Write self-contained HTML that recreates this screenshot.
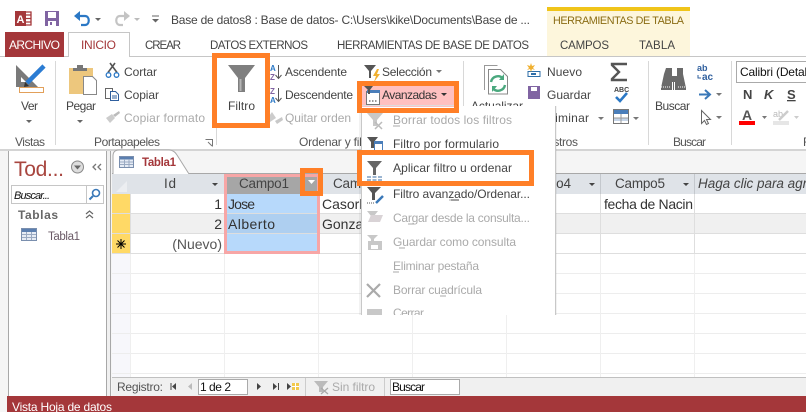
<!DOCTYPE html>
<html><head><meta charset="utf-8"><title>Base de datos8</title>
<style>
html,body{margin:0;padding:0;background:#fff;width:806px;height:412px;overflow:hidden}
svg{display:block}
text{font-family:"Liberation Sans",sans-serif;font-size:12px;fill:#444;white-space:pre}
.g{fill:#aaa}.k{fill:#111}.d{fill:#555}
.a{fill:#666}
</style></head><body>
<svg width="806" height="412" viewBox="0 0 806 412" xmlns="http://www.w3.org/2000/svg">
<rect width="806" height="412" fill="#fff"/>
<!-- contextual tab -->
<rect x="547" y="7" width="143" height="49" fill="#fdf6dc"/><rect x="547" y="7" width="143" height="4" fill="#f0c419"/>
<!-- QAT -->
<rect x="15" y="11" width="11" height="15" fill="#a4373a"/><text x="16.5" y="23" style="font-size:11px;fill:#fff;font-weight:bold">A</text>
<path d="M26 12h5v13h-5M26 15h5M26 18.500h5M26 22h5" fill="none" stroke="#a4373a" stroke-width="1.300"/>
<path d="M45 11h14v15H45z" fill="#8064a2"/><rect x="48" y="12" width="8" height="6" fill="#fff"/><rect x="48" y="21" width="8" height="5" fill="#fff"/><rect x="50" y="22" width="2" height="3" fill="#8064a2"/>
<path d="M76 16h9c5 0 5 9 0 9h-4" fill="none" stroke="#2b78c5" stroke-width="2.200"/><path d="M80 11l-6 5 6 5z" fill="#2b78c5"/>
<path d="M95 18l3 3 3-3z" fill="#666"/>
<path d="M129 16h-9c-5 0-5 9 0 9h3" fill="none" stroke="#c4c4c4" stroke-width="2.200"/><path d="M124 11l6 5-6 5z" fill="#c4c4c4"/>
<path d="M134 18l3 3 3-3z" fill="#bbb"/>
<path d="M152 16h7" stroke="#666"/><path d="M152 19l3.500 3.500 3.500-3.500z" fill="#666"/>
<text x="171" y="24" textLength="359">Base de datos8 : Base de datos- C:\Users\kike\Documents\Base de ...</text>
<text x="553" y="24" textLength="131" style="font-size:10.800px;fill:#8a6c14">HERRAMIENTAS DE TABLA</text>
<!-- tabs -->
<rect x="0" y="56" width="806" height="1" fill="#c6c6c6"/>
<rect x="5" y="32" width="59" height="25" fill="#a4373a"/>
<path d="M68.500 57V32.500H129.500V57" fill="#fff" stroke="#c6c6c6"/>
<text x="9" y="49" textLength="51" style="fill:#fff">ARCHIVO</text>
<text x="81" y="49" textLength="35" style="fill:#a4373a">INICIO</text>
<text x="145" y="49" textLength="36" style="font-size:11.500px">CREAR</text>
<text x="210" y="49" textLength="98" style="font-size:11.500px">DATOS EXTERNOS</text>
<text x="337" y="49" textLength="192" style="font-size:11.500px">HERRAMIENTAS DE BASE DE DATOS</text>
<text x="560" y="49" textLength="49" style="font-size:11.500px">CAMPOS</text>
<text x="639" y="49" textLength="36" style="font-size:11.500px">TABLA</text>
<!-- ribbon -->
<rect x="0" y="149" width="806" height="2" fill="#d4d4d4"/>
<rect x="0" y="151" width="806" height="261" fill="#f5f5f5"/>
<g fill="#d8d8d8"><rect x="55" y="61" width="1" height="84"/><rect x="216" y="61" width="1" height="84"/><rect x="463" y="61" width="1" height="84"/><rect x="648" y="61" width="1" height="84"/><rect x="731" y="61" width="1" height="84"/></g>
<!-- Ver icon -->
<path d="M16 65V87H38Z" fill="#7a7a7a"/><path d="M21 77v5h5z" fill="#fff"/>
<path d="M27 83L44 66" stroke="#2b7cd3" stroke-width="4.500"/><path d="M24 87l1-5 4 4z" fill="#333"/>
<rect x="19.500" y="87.500" width="24" height="5" fill="#fff" stroke="#e2a05a"/>
<text x="21" y="110" textLength="17">Ver</text><path d="M26 120h6l-3 3z" fill="#666"/>
<!-- Pegar -->
<rect x="69" y="68" width="24" height="26" fill="#edc77d"/>
<path d="M73 71v-3h4v-3h6v3h4v3z" fill="#777"/>
<path d="M83.500 76.500h9l4 4v14h-13z" fill="#fff" stroke="#888"/>
<text x="66" y="110" textLength="30">Pegar</text><path d="M77 120h6l-3 3z" fill="#666"/>
<!-- clipboard small -->
<path d="M115 63l-7 9.500M110 63l7 9.500" stroke="#555" stroke-width="1.600"/><circle cx="108.500" cy="75" r="2.300" fill="#fff" stroke="#2b78c5" stroke-width="1.300"/><circle cx="116.500" cy="75" r="2.300" fill="#fff" stroke="#2b78c5" stroke-width="1.300"/>
<text x="124" y="76" textLength="33">Cortar</text>
<path d="M105.500 88.500h7v10h-7z" fill="#fff" stroke="#666"/><path d="M110.500 91.500h5l3 3v6h-8z" fill="#fff" stroke="#2f5f9e"/><path d="M112 96h5M112 98h5" stroke="#2f5f9e"/>
<text x="124" y="99" textLength="35">Copiar</text>
<path d="M106 118l6-4 3 4-5 5z" fill="#ccc"/><path d="M113 115l6-4 1 2-5 4z" fill="#bbb"/>
<text x="124" y="122" textLength="81" class="g">Copiar formato</text>
<text x="94" y="146" textLength="66" class="d">Portapapeles</text>
<text x="15" y="146" textLength="30" class="d">Vistas</text>
<path d="M205.500 139.500h7v7M208 142l4 4" fill="none" stroke="#777"/>
<!-- Filtro -->
<path d="M228 65H255L245 78V92H238V78Z" fill="#7f7f7f"/><path d="M239.500 79h2v12h-2z" fill="#b5b5b5"/>
<text x="228" y="110" textLength="27">Filtro</text>
<!-- sort -->
<text x="270" y="71" style="font-size:8px;fill:#2b78c5;font-weight:bold">A</text><text x="270" y="80" style="font-size:8px;fill:#8064a2;font-weight:bold">Z</text>
<text x="270" y="94" style="font-size:8px;fill:#8064a2;font-weight:bold">Z</text><text x="270" y="103" style="font-size:8px;fill:#2b78c5;font-weight:bold">A</text>
<path d="M278.500 65V78M275.500 75l3 3.500 3-3.500M278.500 88V101M275.500 98l3 3.500 3-3.500" fill="none" stroke="#555"/>
<text x="285" y="76" textLength="62">Ascendente</text>
<text x="285" y="99" textLength="68">Descendente</text>
<path d="M272 112l4 6-6 4-3-3z" fill="#ccc"/><path d="M275 121l7-4 1 3-6 4z" fill="#c8c8c8"/>
<text x="285" y="122" textLength="66" class="g">Quitar orden</text>
<text x="299" y="146" textLength="80" class="d">Ordenar y filtrar</text>
<!-- seleccion -->
<path d="M364 65H376L371 71V78H369V71Z" fill="#555"/><path d="M377 69l-4 7h3l-2 6 6-8h-3l2-5z" fill="#f0b030"/>
<text x="382" y="76" textLength="50">Selección</text><path d="M436 70h6l-3 3z" fill="#777"/>
<!-- Actualizar -->
<path d="M484.500 90V65.500h13" fill="none" stroke="#999"/><path d="M488.500 69.500h12l7 7v17.500h-19z" fill="#fff" stroke="#888"/>
<path d="M491 82a7 7 0 0 1 12-3.500M505 85a7 7 0 0 1-12 3.500" fill="none" stroke="#4aa87e" stroke-width="2.400"/><path d="M504 74v6h-5zM492 92v-6h5z" fill="#4aa87e"/>
<text x="471" y="110" textLength="52">Actualizar</text>
<!-- registros -->
<path d="M528 71.500h12v5h-12z" fill="#fff" stroke="#2f6fa8"/><rect x="531" y="73" width="5" height="2" fill="#2f6fa8"/><path d="M531 63l1 3 3-1-2 3 2 2-3-1-1 3-1-3-3 1 2-2-2-3 3 1z" fill="#f0b030"/>
<text x="547" y="76" textLength="35">Nuevo</text>
<rect x="528" y="86" width="12" height="13" fill="#8064a2"/><rect x="531" y="87" width="6" height="4" fill="#fff"/>
<text x="547" y="99" textLength="44">Guardar</text>
<text x="544" y="122" textLength="45">Eliminar</text><path d="M598 117h6l-3 3z" fill="#777"/>
<text x="530" y="146" textLength="48" class="d">Registros</text>
<path d="M627 64h-15v1l7 7-7 7v1h15" fill="none" stroke="#555" stroke-width="2.400"/>
<text x="614" y="92" style="font-size:7px;fill:#444;font-weight:bold">ABC</text>
<path d="M616 97l4 4 7-8" fill="none" stroke="#2b78c5" stroke-width="2.600"/>
<rect x="613.500" y="109.500" width="15" height="14" fill="#fff" stroke="#777"/><rect x="614" y="110" width="14" height="4" fill="#4a7eba"/><rect x="614" y="118" width="14" height="3" fill="#c6d5e8"/><path d="M621 114v9M614 118h14" stroke="#999"/>
<path d="M633 117h6l-3 3z" fill="#777"/>
<!-- Buscar binoculars -->
<path d="M666 68h6v8h5v-8h6v6l3 14v2h-11v-8h-1v8h-1v-8h-1v8h-11v-2l3-14z" fill="#6a6a6a"/><path d="M661 87h10M678 87h7" stroke="#fff" stroke-dasharray="1 1"/>
<text x="655" y="110" textLength="35">Buscar</text>
<text x="697" y="71" style="font-size:9px;fill:#2f5f9e;font-weight:bold">ab</text>
<text x="702" y="80" style="font-size:10px;fill:#2f5f9e;font-weight:bold">ac</text><path d="M698 75v3h3" stroke="#2f5f9e" fill="none"/>
<path d="M699 94.500h10M705 90l5 4.500-5 4.500" fill="none" stroke="#3a78b8" stroke-width="2"/>
<path d="M716 93h6l-3 3z" fill="#777"/>
<path d="M701.500 110.500v13l3-3 2 4 2-1-2-4h4z" fill="#fff" stroke="#666"/>
<path d="M716 116h6l-3 3z" fill="#777"/>
<text x="673" y="146" textLength="33" class="d">Buscar</text>
<!-- font -->
<rect x="736.500" y="61.500" width="75" height="21" fill="#fff" stroke="#aaa"/>
<text x="740" y="76" textLength="80" class="k">Calibri (Detalle)</text>
<text x="743" y="99" style="font-weight:bold;font-size:13px">N</text>
<text x="764" y="99" style="font-weight:bold;font-style:italic;font-size:13px">K</text>
<text x="787" y="99" style="font-weight:bold;font-size:13px;text-decoration:underline">S</text>
<text x="742" y="120" style="font-size:14px;font-weight:bold;fill:#555">A</text><rect x="739" y="121" width="16" height="4" fill="#f00"/>
<path d="M762 116h5l-2.500 3z" fill="#777"/>
<text x="773" y="117" style="font-size:9px;fill:#bbb">ab</text><path d="M779 120l9-9" stroke="#ccc" stroke-width="2.500"/><rect x="773" y="121" width="16" height="4" fill="#e6e6e6"/>
<path d="M794 116h5l-2.500 3z" fill="#ccc"/>
<text x="803" y="146" class="d">F</text>

<!-- nav pane -->
<rect x="8" y="151" width="99" height="245" fill="#fff"/>
<path d="M8.500 151V396M106.500 151V396" stroke="#a8a8a8"/><rect x="107" y="151" width="3" height="245" fill="#f0f0f0"/><rect x="110" y="151" width="1" height="245" fill="#a8a8a8"/>
<text x="14" y="176" textLength="50" style="font-size:21px;fill:#a8463f">Tod...</text>
<circle cx="77.500" cy="167" r="6" fill="#ddd" stroke="#888"/><path d="M74 165.500h7l-3.500 4z" fill="#666"/>
<path d="M96 164l-3 3 3 3M101 164l-3 3 3 3" fill="none" stroke="#777" stroke-width="1.300"/>
<rect x="11.500" y="185.500" width="92" height="18" fill="#fff" stroke="#c6c6c6"/><rect x="86" y="186" width="1" height="17" fill="#c6c6c6"/>
<text x="14" y="199" textLength="36" style="font-size:11px;font-style:italic;fill:#111">Buscar...</text>
<circle cx="96" cy="193" r="3.500" fill="#fff" stroke="#3a78b8" stroke-width="1.600"/><path d="M93 196l-3.500 3.500" stroke="#3a78b8" stroke-width="2"/>
<text x="18" y="219" textLength="40" style="font-weight:bold;fill:#666">Tablas</text>
<path d="M86 214l3.500-3 3.500 3M86 218l3.500-3 3.500 3" fill="none" stroke="#666" stroke-width="1.200"/>
<rect x="21.500" y="228.500" width="15" height="12" fill="#e6ecf5" stroke="#7a8fae"/><rect x="22" y="229" width="14" height="3" fill="#5b7fb0"/><path d="M26.500 232v8M31.500 232v8M22 234.500h14M22 237.500h14" stroke="#9aaac2"/>
<text x="48" y="240" textLength="32" style="font-size:11.500px;fill:#6a5a66">Tabla1</text>

<!-- datasheet -->
<rect x="112" y="174" width="694" height="204" fill="#fff"/>
<rect x="112" y="173" width="694" height="1" fill="#a8a8a8"/>
<path d="M113 174V156q0-6 6-6h50q5 0 8 5l12 19" fill="#fff" stroke="#a8a8a8"/>
<rect x="114" y="173" width="74" height="2" fill="#fff"/>
<rect x="119.500" y="156.500" width="14" height="11" fill="#e6ecf5" stroke="#7a8fae"/><rect x="120" y="157" width="13" height="2.500" fill="#5b7fb0"/><path d="M124.500 159v8M129 159v8M120 162h13M120 164.500h13" stroke="#9aaac2"/>
<text x="142" y="166" textLength="34" style="font-weight:bold;font-size:11.500px;fill:#a4373a">Tabla1</text>
<rect x="112" y="174" width="694" height="20" fill="#dfe3e8"/>
<path d="M116 192l11-11v11z" fill="#eceef1"/>
<rect x="112" y="194" width="18" height="60" fill="#ffd966"/>
<rect x="112" y="254" width="18" height="124" fill="#f7f7fb"/>
<rect x="130" y="214" width="676" height="20" fill="#f0f0f0"/>
<rect x="224" y="174" width="95" height="20" fill="#a6a6a6"/>
<rect x="224" y="194" width="95" height="60" fill="#b7d9fb"/><rect x="224" y="214" width="95" height="20" fill="#aecff0"/>
<g fill="#dedede"><rect x="112" y="213" width="694" height="1"/><rect x="112" y="233" width="694" height="1"/><rect x="112" y="253" width="694" height="1"/></g>
<g fill="#ededed"><rect x="112" y="273" width="694" height="1"/><rect x="112" y="293" width="694" height="1"/><rect x="112" y="313" width="694" height="1"/><rect x="112" y="333" width="694" height="1"/><rect x="112" y="353" width="694" height="1"/><rect x="112" y="373" width="694" height="1"/></g>
<g fill="#dedede"><rect x="130" y="194" width="1" height="60"/><rect x="318" y="194" width="1" height="60"/><rect x="412" y="194" width="1" height="60"/><rect x="506" y="194" width="1" height="60"/><rect x="600" y="194" width="1" height="60"/><rect x="694" y="194" width="1" height="60"/></g>
<g fill="#efefef"><rect x="130" y="254" width="1" height="124"/><rect x="224" y="254" width="1" height="124"/><rect x="318" y="254" width="1" height="124"/><rect x="412" y="254" width="1" height="124"/><rect x="506" y="254" width="1" height="124"/><rect x="600" y="254" width="1" height="124"/><rect x="694" y="254" width="1" height="124"/></g>
<g fill="#c4c8cd"><rect x="412" y="174" width="1" height="20"/><rect x="506" y="174" width="1" height="20"/><rect x="600" y="174" width="1" height="20"/><rect x="694" y="174" width="1" height="20"/></g>
<rect x="225.500" y="175.500" width="93" height="77" fill="none" stroke="#f7a6a6" stroke-width="3"/>
<rect x="224" y="175" width="2" height="19" fill="#f7a6a6"/>
<text x="164" y="188" textLength="12" style="font-size:13.500px">Id</text>
<text x="239" y="188" textLength="50" style="font-size:13.500px">Campo1</text>
<text x="333" y="188" textLength="50" style="font-size:13.500px">Campo2</text>
<text x="521" y="188" textLength="50" style="font-size:13.500px">Campo4</text>
<text x="615" y="188" textLength="50" style="font-size:13.500px">Campo5</text>
<text x="698" y="188" textLength="136" style="font-size:13.500px;font-style:italic">Haga clic para agregar</text>
<path d="M212 183h6l-3 3zM589 183h6l-3 3zM683 183h6l-3 3z" fill="#444"/>
<text x="222" y="209" text-anchor="end" style="font-size:14px;fill:#333">1</text>
<text x="222" y="229" text-anchor="end" style="font-size:14px;fill:#333">2</text>
<text x="222" y="249" text-anchor="end" style="font-size:14px;fill:#555">(Nuevo)</text>
<text x="228" y="209" textLength="27" style="font-size:14px;fill:#333">Jose</text>
<text x="228" y="229" textLength="47" style="font-size:14px;fill:#333">Alberto</text>
<text x="322" y="209" style="font-size:14px;fill:#333">Casorla</text>
<text x="322" y="229" style="font-size:14px;fill:#333">Gonzalez</text>
<text x="604" y="209" textLength="89" style="font-size:14px;fill:#333">fecha de Nacin</text>
<path d="M116 244h10M121 239v10M117.500 240.500l7 7M124.500 240.500l-7 7" stroke="#000" stroke-width="1"/>

<!-- menu -->
<rect x="359" y="106" width="198" height="209" fill="#000" opacity=".05"/>
<rect x="361" y="106" width="194" height="209" fill="#fff"/>
<rect x="361" y="106" width="1" height="209" fill="#c8c8c8"/><rect x="555" y="106" width="1" height="209" fill="#c8c8c8"/>
<text x="393" y="124" textLength="119" class="g">Borrar todos los filtros</text>
<text x="393" y="148" textLength="106">Filtro por formulario</text>
<text x="393" y="172" textLength="119">Aplicar filtro u ordenar</text>
<text x="393" y="198" textLength="137">Filtro avanzado/Ordenar...</text>
<text x="393" y="222" textLength="137" class="g">Cargar desde la consulta...</text>
<text x="393" y="246" textLength="123" class="g">Guardar como consulta</text>
<text x="393" y="270" textLength="86" class="g">Eliminar pestaña</text>
<text x="393" y="294" textLength="89" class="g">Borrar cuadrícula</text>
<text x="393" y="317" textLength="31" class="g">Cerrar</text>
<rect x="361" y="315" width="196" height="10" fill="#fff"/>
<path d="M412.500 315v10M506.500 315v10" stroke="#efefef"/>
<!-- accelerator underlines -->
<path d="M393 126h7M406 150h0M400 174h3M449 200h8M408 224h6M399 248h6M393 272h6M440 296h6" stroke="#aaa"/>
<path d="M400 174h3M451 200h8" stroke="#444"/>
<!-- menu icons -->
<path d="M367 113H383L377 120V126H373V120Z" fill="#c8c8c8"/><path d="M375 122l7 7M382 122l-7 7" stroke="#bbb" stroke-width="1.500"/>
<path d="M367 137H378L374 142V148H371V142Z" fill="#555"/><rect x="374.500" y="141.500" width="8" height="10" fill="#fff" stroke="#4a7eba"/><rect x="375" y="142" width="7" height="2" fill="#4a7eba"/>
<path d="M367 161H382L376 168V175H373V168Z" fill="#666"/><path d="M367 177h4M372.500 177h4M378 177h4M367 180h4M372.500 180h4M378 180h4" stroke="#3a6ea5"/>
<path d="M367 187H381L375 193V200H372V193Z" fill="#555"/><path d="M376 203l7-7" stroke="#3a78b8" stroke-width="2.500"/><path d="M367 203h7" stroke="#555" stroke-dasharray="1 1"/>
<path d="M367 211H378L374 216V221H371V216Z" fill="#c8c8c8"/><path d="M368 222h12l3-7h-12z" fill="#d9d3d6"/>
<path d="M367 235H378L374 239V242H371V239Z" fill="#c8c8c8"/><rect x="368" y="241" width="14" height="9" fill="#c8c8c8"/><rect x="371" y="245" width="7" height="4" fill="#fff"/>
<path d="M367 284l13 13M380 284l-13 13" stroke="#aaa" stroke-width="2.200"/>
<path d="M367 309h15v6h-15z" fill="#c8c8c8"/>

<!-- orange highlights -->
<rect x="362" y="86" width="92" height="21" fill="#ffc0c0"/><rect x="362" y="105" width="92" height="1" fill="#ddd"/>
<rect x="366.500" y="91.500" width="13" height="13" fill="#fff" stroke="#777"/><rect x="367" y="90" width="13" height="3" fill="#4a7eba"/><path d="M364 86H373L370 90V94H368V90Z" fill="#555"/><path d="M369 101h1.500M372 101h1.500M375 101h1.500" stroke="#333"/>
<text x="382" y="99" textLength="55" style="fill:#333">Avanzadas</text><path d="M441 93h6l-3 3z" fill="#333"/>
<g fill="none" stroke="#ff7f27">
<rect x="214.500" y="55.500" width="53" height="70" stroke-width="5"/>
<rect x="359.500" y="83.500" width="97" height="27" stroke-width="5"/>
<rect x="359.500" y="152.500" width="172" height="31" stroke-width="5"/>
<rect x="302.500" y="170.500" width="18" height="23" stroke-width="5"/>
</g>
<path d="M308 180h7l-3.500 4z" fill="#fff"/>

<!-- record nav -->
<rect x="112" y="377" width="694" height="1" fill="#c0c0c0"/>
<rect x="112" y="378" width="694" height="18" fill="#f0f0f0"/>
<text x="117" y="391" textLength="46" style="fill:#555">Registro:</text>
<path d="M171 383v7" stroke="#444"/><path d="M176 383v7l-4-3.500z" fill="#444"/><path d="M192 383v7l-4-3.500z" fill="#bbb"/>
<rect x="198.500" y="379.500" width="49" height="15" fill="#fff" stroke="#aaa"/>
<text x="200" y="391" textLength="31" class="k">1 de 2</text>
<path d="M257 383v7l4-3.500zM273 383v7l4-3.500z" fill="#444"/><path d="M278.500 383v7" stroke="#444"/><path d="M287 383v7l4-3.500z" fill="#444"/>
<rect x="292" y="383" width="7" height="7" fill="#f2c94c"/><path d="M292 386.500h7M295.500 383v7" stroke="#fff"/>
<rect x="305" y="378" width="1" height="18" fill="#ccc"/>
<path d="M314 381H328L323 387V392H319V387Z" fill="#bbb"/><path d="M321 388l7 6M328 388l-7 6" stroke="#aaa" stroke-width="1.300"/>
<text x="332" y="391" textLength="43" class="g">Sin filtro</text>
<rect x="384" y="378" width="1" height="18" fill="#ccc"/>
<rect x="390.500" y="379.500" width="69" height="15" fill="#fff" stroke="#aaa"/>
<text x="392" y="391" textLength="33" class="k">Buscar</text>

<!-- status -->
<rect x="0" y="151" width="8" height="261" fill="#f5f5f5"/>
<rect x="7" y="396" width="799" height="16" fill="#a4373a"/>
<text x="12" y="411" textLength="100" style="fill:#fff">Vista Hoja de datos</text>
</svg>
</body></html>
